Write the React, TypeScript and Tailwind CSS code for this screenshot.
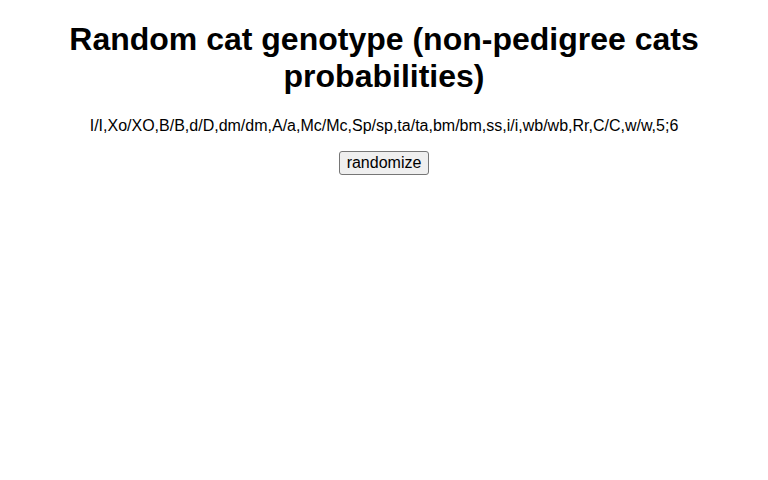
import React from 'react';

const genotype = 'I/I,Xo/XO,B/B,d/D,dm/dm,A/a,Mc/Mc,Sp/sp,ta/ta,bm/bm,ss,i/i,wb/wb,Rr,C/C,w/w,5;6';

const App: React.FC = () => {
  return (
    <div className="min-h-[480px] bg-white text-black text-center px-2 font-['Liberation_Sans',Arial,sans-serif]">
      <h1 className="pt-[21px] text-[32px] leading-[37px] font-bold">
        Random cat genotype (non-pedigree cats probabilities)
      </h1>
      <p className="mt-[22px] text-base leading-[18px]">{genotype}</p>
      <div className="mt-[16px]">
        <button className="h-6 px-[7px] py-px text-base leading-[18px] bg-[#efefef] border border-solid border-[#767676] rounded-[3px] hover:bg-[#e5e5e5]">
          randomize
        </button>
      </div>
    </div>
  );
};

export default App;
